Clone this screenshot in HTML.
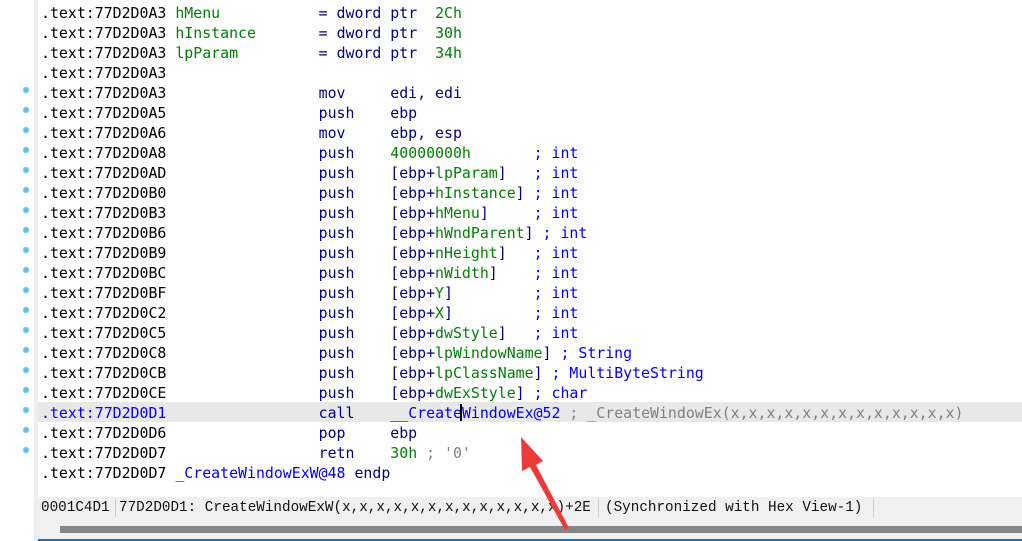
<!DOCTYPE html>
<html><head><meta charset="utf-8"><style>
body{margin:0;width:1022px;height:541px;background:#fff;position:relative;overflow:hidden;font-family:"Liberation Mono",monospace}
.gut{position:absolute;left:34px;top:0;width:4px;height:541px;background:#eee}
pre{position:absolute;left:41px;top:3px;margin:0;font-size:14.88px;line-height:20px;color:#000}
.hl{position:absolute;left:38px;top:402px;width:984px;height:20px;background:#e8e8e8}
.n{color:#000080}.g{color:#008000}.b{color:#0000ff}.c{color:#808080}
.dot{position:absolute;left:23px;width:6px;height:6px;border-radius:3px;background:#5bc4f0}
.status{position:absolute;left:38px;top:497px;width:984px;height:22px;background:#f0f0f0;font-size:14.3px;line-height:22px;font-family:"Liberation Mono",monospace;color:#111}
.status span{position:absolute;top:0}
.sep{position:absolute;top:2px;width:1px;height:18px;background:#ccc}
.track{position:absolute;left:38px;top:519px;width:984px;height:20px;background:#f0f0f0}
.thumb{position:absolute;left:60px;top:526px;width:962px;height:7px;background:#868686}
.blue{position:absolute;left:38px;top:539px;width:984px;height:2px;background:#0078d7}
</style></head><body>
<div class="gut"></div>
<div class="hl"></div>
<pre>.text:77D2D0A3 <span class="g">hMenu</span>           <span class="n">= dword ptr</span>  <span class="g">2Ch</span>
.text:77D2D0A3 <span class="g">hInstance</span>       <span class="n">= dword ptr</span>  <span class="g">30h</span>
.text:77D2D0A3 <span class="g">lpParam</span>         <span class="n">= dword ptr</span>  <span class="g">34h</span>
.text:77D2D0A3
.text:77D2D0A3                 <span class="n">mov     edi, edi</span>
.text:77D2D0A5                 <span class="n">push    ebp</span>
.text:77D2D0A6                 <span class="n">mov     ebp, esp</span>
.text:77D2D0A8                 <span class="n">push</span>    <span class="g">40000000h</span>       <span class="b">; int</span>
.text:77D2D0AD                 <span class="n">push    [ebp+</span><span class="g">lpParam</span><span class="n">]</span>   <span class="b">; int</span>
.text:77D2D0B0                 <span class="n">push    [ebp+</span><span class="g">hInstance</span><span class="n">]</span> <span class="b">; int</span>
.text:77D2D0B3                 <span class="n">push    [ebp+</span><span class="g">hMenu</span><span class="n">]</span>     <span class="b">; int</span>
.text:77D2D0B6                 <span class="n">push    [ebp+</span><span class="g">hWndParent</span><span class="n">]</span> <span class="b">; int</span>
.text:77D2D0B9                 <span class="n">push    [ebp+</span><span class="g">nHeight</span><span class="n">]</span>   <span class="b">; int</span>
.text:77D2D0BC                 <span class="n">push    [ebp+</span><span class="g">nWidth</span><span class="n">]</span>    <span class="b">; int</span>
.text:77D2D0BF                 <span class="n">push    [ebp+</span><span class="g">Y</span><span class="n">]</span>         <span class="b">; int</span>
.text:77D2D0C2                 <span class="n">push    [ebp+</span><span class="g">X</span><span class="n">]</span>         <span class="b">; int</span>
.text:77D2D0C5                 <span class="n">push    [ebp+</span><span class="g">dwStyle</span><span class="n">]</span>   <span class="b">; int</span>
.text:77D2D0C8                 <span class="n">push    [ebp+</span><span class="g">lpWindowName</span><span class="n">]</span> <span class="b">; String</span>
.text:77D2D0CB                 <span class="n">push    [ebp+</span><span class="g">lpClassName</span><span class="n">]</span> <span class="b">; MultiByteString</span>
.text:77D2D0CE                 <span class="n">push    [ebp+</span><span class="g">dwExStyle</span><span class="n">]</span> <span class="b">; char</span>
<span class="b">.text:77D2D0D1</span>                 <span class="n">call</span>    <span class="b">__CreateWindowEx@52</span> <span class="c">; _CreateWindowEx(x,x,x,x,x,x,x,x,x,x,x,x,x)</span>
.text:77D2D0D6                 <span class="n">pop     ebp</span>
.text:77D2D0D7                 <span class="n">retn</span>    <span class="g">30h</span> <span class="c">; '0'</span>
.text:77D2D0D7 <span class="b">_CreateWindowExW@48</span> <span class="n">endp</span></pre>
<div style="position:absolute;left:460px;top:404px;width:2px;height:17px;background:#000"></div>
<div class="dot" style="top:87px"></div><div class="dot" style="top:107px"></div><div class="dot" style="top:127px"></div><div class="dot" style="top:147px"></div><div class="dot" style="top:167px"></div><div class="dot" style="top:187px"></div><div class="dot" style="top:207px"></div><div class="dot" style="top:227px"></div><div class="dot" style="top:247px"></div><div class="dot" style="top:267px"></div><div class="dot" style="top:287px"></div><div class="dot" style="top:307px"></div><div class="dot" style="top:327px"></div><div class="dot" style="top:347px"></div><div class="dot" style="top:367px"></div><div class="dot" style="top:387px"></div><div class="dot" style="top:407px"></div><div class="dot" style="top:427px"></div><div class="dot" style="top:447px"></div>
<div class="status"><span style="left:3px">0001C4D1</span><div class="sep" style="left:77px"></div><span style="left:81px">77D2D0D1: CreateWindowExW(x,x,x,x,x,x,x,x,x,x,x,x,x)+2E</span><div class="sep" style="left:560px"></div><span style="left:567px">(Synchronized with Hex View-1)</span><div class="sep" style="left:835px"></div></div>
<div class="track"></div><div class="thumb"></div><div class="blue"></div>
<svg style="position:absolute;left:0;top:0" width="1022" height="541"><polygon points="521,437 543,461 536,465 569,528 565,530 530,467 522,471" fill="#f03a3a"/></svg>
</body></html>
